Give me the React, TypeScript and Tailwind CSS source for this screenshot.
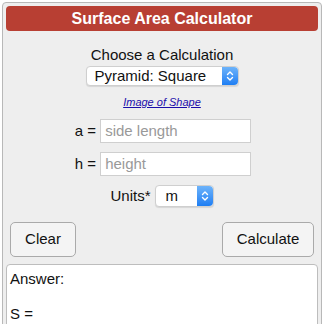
const SelectArrows = () => (
  <span className="flex h-full w-[16px] items-center justify-center rounded-r-[4px] bg-gradient-to-b from-[#6cb3fa] to-[#1c7ef3]">
    <svg width="8" height="12" viewBox="0 0 8 12" fill="none" stroke="white" strokeWidth="1.4" strokeLinecap="round" strokeLinejoin="round">
      <path d="M1.5 4.5 L4 2 L6.5 4.5" />
      <path d="M1.5 7.5 L4 10 L6.5 7.5" />
    </svg>
  </span>
);

const App = () => {
  return (
    <div className="h-[324px] w-[324px] overflow-hidden bg-white pl-[2px] pt-[2px] font-['Liberation_Sans',Arial,sans-serif] text-[#111]">
      <div className="flex h-[340px] w-[320px] flex-col rounded-[4px] border border-[#b8b8b8] bg-[#eeeeee] px-[3px] pt-[3px]">
        <div className="flex h-[26px] items-center justify-center rounded-[4px] bg-[#b83f33] text-[16px] font-bold text-white">
          Surface Area Calculator
        </div>

        <div className="mt-[15px] text-center text-[15px] leading-[18px]">Choose a Calculation</div>
        <div className="mt-[2px] flex justify-center">
          <div className="flex h-[20px] w-[153px] items-center rounded-[4px] border border-[#cfcfcf] bg-white pl-[8px] text-[15px] shadow-[0_1px_1px_rgba(0,0,0,0.1)]">
            <span className="flex-1">Pyramid: Square</span>
            <SelectArrows />
          </div>
        </div>

        <div className="mt-[10px] text-center text-[11px] italic leading-[12px] text-[#1a0dab] underline">
          Image of Shape
        </div>

        <div className="mt-[11px] flex items-center justify-center pl-[2px] text-[15px]">
          <span className="mr-[4px]">a =</span>
          <div className="flex h-[24px] w-[151px] items-center border border-[#cfcfcf] bg-white px-[4px] text-[#999]">
            side length
          </div>
        </div>
        <div className="mt-[9px] flex items-center justify-center pl-[2px] text-[15px]">
          <span className="mr-[4px]">h =</span>
          <div className="flex h-[24px] w-[151px] items-center border border-[#cfcfcf] bg-white px-[4px] text-[#999]">
            height
          </div>
        </div>

        <div className="mt-[9px] flex items-center justify-center text-[15px]">
          <span className="mr-[4px]">Units*</span>
          <div className="flex h-[22px] w-[59px] items-center rounded-[4px] border border-[#cfcfcf] bg-white pl-[10px] shadow-[0_1px_1px_rgba(0,0,0,0.1)]">
            <span className="flex-1">m</span>
            <SelectArrows />
          </div>
        </div>

        <div className="mt-[14px] flex justify-between px-[4px] text-[15px]">
          <div className="flex h-[35px] w-[66px] items-center justify-center rounded-[5px] border border-[#aaaaaa] bg-[#f4f4f4]">
            Clear
          </div>
          <div className="flex h-[35px] w-[92px] items-center justify-center rounded-[5px] border border-[#aaaaaa] bg-[#f4f4f4]">
            Calculate
          </div>
        </div>

        <div className="mt-[7px] h-[80px] rounded-t-[4px] border border-[#bdbdbd] bg-white px-[3px] pt-[5px] text-[15px] leading-[18px]">
          <div>Answer:</div>
          <div className="mt-[17px]">S =</div>
        </div>
      </div>
    </div>
  );
};

export default App;
